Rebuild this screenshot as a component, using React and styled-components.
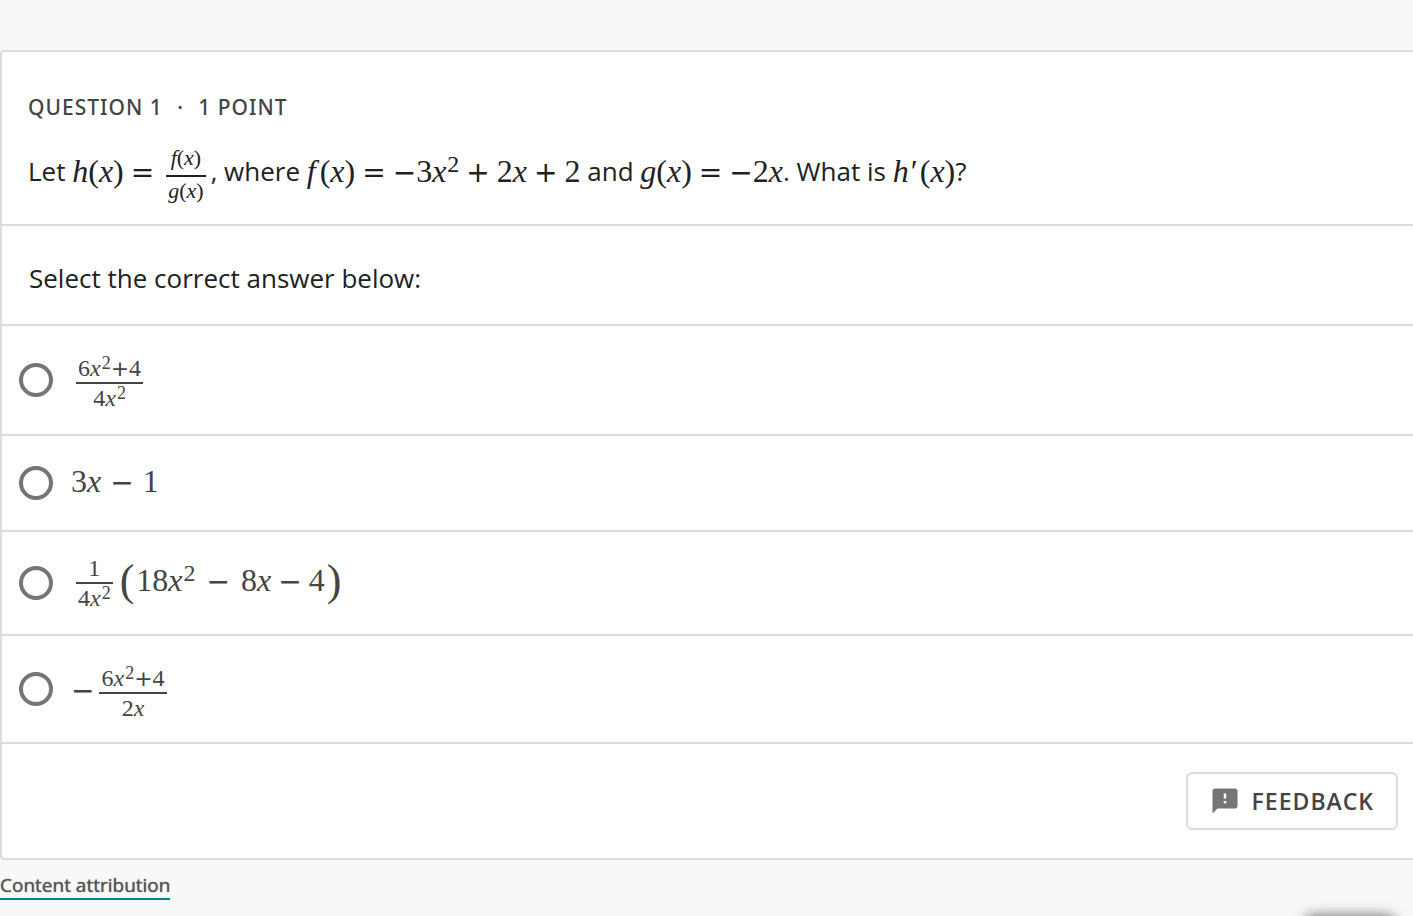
import React from 'react'
import styled, { createGlobalStyle } from 'styled-components'
import { MdFeedback } from 'react-icons/md'

const X = () => <Var>x</Var>

const Frac = ({ top, bottom, compact }) => (
  <Fraction $compact={compact}>
    <Numerator $compact={compact}>{top}</Numerator>
    <Denominator>{bottom}</Denominator>
  </Fraction>
)

const Squared = () => (
  <>
    <X />
    <Sup>2</Sup>
  </>
)

const AnswerA = () => (
  <Frac
    top={
      <>
        6<Squared />
        <SmallOp>+</SmallOp>4
      </>
    }
    bottom={
      <>
        4<Squared />
      </>
    }
  />
)

const AnswerB = () => (
  <>
    3<X />
    <Op $gap={9}>−</Op>1
  </>
)

const AnswerC = () => (
  <>
    <Frac
      top="1"
      bottom={
        <>
          4<Squared />
        </>
      }
    />
    <Paren>(</Paren>18
    <Squared />
    <Op $gap={11}>−</Op>8<X />
    <Op>−</Op>4<Paren>)</Paren>
  </>
)

const AnswerD = () => (
  <>
    <Op $gap={0}>−</Op>
    <Frac
      top={
        <>
          6<Squared />
          <SmallOp>+</SmallOp>4
        </>
      }
      bottom={
        <>
          2<X />
        </>
      }
    />
  </>
)

const answers = [
  { id: 'a', pad: 24, inset: '5px 0 0', Math: AnswerA },
  { id: 'b', pad: 21, inset: '0 0 4px', Math: AnswerB },
  { id: 'c', pad: 24, inset: '0', Math: AnswerC },
  { id: 'd', pad: 22, inset: '7px 0 0', Math: AnswerD },
]

const App = () => {
  return (
    <>
      <GlobalStyle />
      <Page>
        <Card>
          <Question>
            <Title>
              QUESTION 1 <Dot>·</Dot> 1 POINT
            </Title>
            <Prompt>
              Let{' '}
              <MathText>
                <Var>h</Var>(<X />)<Op>=</Op>
                <Frac
                  compact
                  top={
                    <>
                      <Var>f</Var>(<X />)
                    </>
                  }
                  bottom={
                    <>
                      <Var>g</Var>(<X />)
                    </>
                  }
                />
              </MathText>
              , where{' '}
              <MathText>
                <Var $gap={4}>f</Var>(<X />)<Op>=</Op>
                <Op $gap={0}>−</Op>3<Squared />
                <Op>+</Op>2<X />
                <Op>+</Op>2
              </MathText>{' '}
              and{' '}
              <MathText>
                <Var>g</Var>(<X />)<Op>=</Op>
                <Op $gap={0}>−</Op>2<X />
              </MathText>
              . What is{' '}
              <MathText>
                <Var>h</Var>
                <Prime>′</Prime>(<X />)
              </MathText>
              ?
            </Prompt>
          </Question>
          <Choices>
            <Legend>Select the correct answer below:</Legend>
            {answers.map(({ id, pad, inset, Math }) => (
              <Choice key={id} $pad={pad}>
                <Radio type="radio" name="answer" value={id} />
                <ChoiceMath $inset={inset}>
                  <Math />
                </ChoiceMath>
              </Choice>
            ))}
          </Choices>
          <Actions>
            <FeedbackButton type="button">
              <MdFeedback />
              FEEDBACK
            </FeedbackButton>
          </Actions>
        </Card>
        <Attribution href="#attribution">Content attribution</Attribution>
      </Page>
      <FloatingTab />
    </>
  )
}

const GlobalStyle = createGlobalStyle`
  * {
    box-sizing: border-box;
  }
  body {
    margin: 0;
    background: #f8f8f8;
    color: #212121;
    font-family: 'Open Sans', 'Noto Sans', sans-serif;
  }
`

const Page = styled.main`
  min-height: 100vh;
  padding-top: 50px;
`

const Card = styled.section`
  background: #fff;
  border: 2px solid #dcdcdc;
  border-right: none;
  border-radius: 4px 0 0 4px;
`

const Question = styled.header`
  padding: 41px 26px 21px;
`

const Title = styled.h1`
  margin: 0 0 20px;
  color: #444;
  font-family: 'Noto Sans', sans-serif;
  font-size: 21px;
  font-weight: 500;
  line-height: 28px;
  letter-spacing: 1px;
`

const Dot = styled.span`
  margin: 0 8px;
`

const Prompt = styled.p`
  margin: 0;
  font-size: 26px;
  line-height: 60px;
`

const MathText = styled.span`
  font-family: 'Liberation Serif', serif;
  font-size: 32px;
  line-height: 32px;
  white-space: nowrap;
  vertical-align: -1px;
`

const Var = styled.i`
  margin-right: ${({ $gap = 0 }) => $gap}px;
  font-style: italic;
`

const Op = styled.span`
  margin: 0 ${({ $gap = 7 }) => $gap}px;
  font-family: 'DejaVu Sans', sans-serif;
  font-size: 28px;
  line-height: 1px;
`

const SmallOp = styled.span`
  font-family: 'DejaVu Sans', sans-serif;
  font-size: 22px;
  line-height: 1px;
`

const Sup = styled.sup`
  margin-left: 1px;
  font-size: 75%;
  line-height: 1px;
  vertical-align: 0.4em;
`

const Prime = styled.span`
  margin: 0 2px;
`

const Paren = styled.span`
  margin: 0 2px;
  font-size: 44px;
  line-height: 1px;
  vertical-align: -4px;
`

const Fraction = styled.span`
  display: inline-flex;
  flex-direction: column;
  margin: 0 5px;
  font-size: ${({ $compact }) => ($compact ? '22px' : '24px')};
  line-height: 24px;
  text-align: center;
  vertical-align: middle;
`

const Numerator = styled.span`
  padding: 0 2px ${({ $compact }) => ($compact ? '5px' : '2px')};
  border-bottom: 2px solid currentColor;
`

const Denominator = styled.span`
  padding: 2px 2px 0;
`

const Choices = styled.fieldset`
  margin: 0;
  padding: 0;
  border: none;
`

const Legend = styled.legend`
  width: 100%;
  padding: 34px 27px 28px;
  border-top: 2px solid #dcdcdc;
  font-size: 26px;
  line-height: 36px;
`

const Choice = styled.label`
  display: flex;
  align-items: center;
  gap: 18px;
  padding: ${({ $pad }) => $pad}px 17px;
  border-top: 2px solid #dcdcdc;
  cursor: pointer;
`

const Radio = styled.input`
  appearance: none;
  flex: none;
  width: 34px;
  height: 34px;
  margin: 0;
  border: 4px solid #757575;
  border-radius: 50%;
  &:checked {
    background: radial-gradient(#757575 45%, transparent 50%);
  }
`

const ChoiceMath = styled.span`
  padding: ${({ $inset }) => $inset};
  color: #444;
  font-family: 'Liberation Serif', serif;
  font-size: 32px;
  line-height: 48px;
`

const Actions = styled.footer`
  display: flex;
  justify-content: flex-end;
  padding: 28px 15px;
  border-top: 2px solid #dcdcdc;
`

const FeedbackButton = styled.button`
  display: flex;
  align-items: center;
  gap: 12px;
  height: 58px;
  padding: 0 22px;
  background: #fff;
  border: 2px solid #dcdcdc;
  border-radius: 6px;
  color: #444;
  font-family: inherit;
  font-size: 23px;
  font-weight: 600;
  letter-spacing: 1px;
  svg {
    width: 30px;
    height: 30px;
    color: #757575;
  }
`

const Attribution = styled.a`
  display: inline-block;
  margin-top: 12px;
  border-bottom: 2px solid #00838f;
  color: #555;
  font-size: 19px;
  line-height: 26px;
  text-decoration: none;
  text-shadow: 0 0 1px #555;
`

const FloatingTab = styled.div`
  position: fixed;
  right: 18px;
  bottom: -40px;
  width: 90px;
  height: 40px;
  border-radius: 8px;
  box-shadow: 0 0 14px rgba(0, 0, 0, 0.6);
`

export default App
